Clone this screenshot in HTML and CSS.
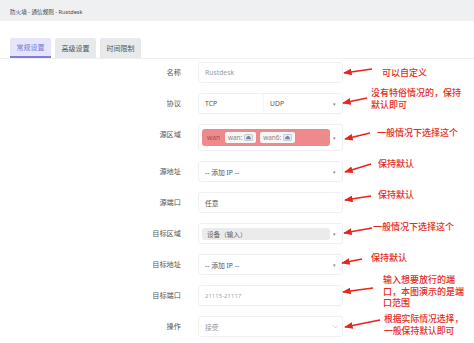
FILE: index.html
```html
<!DOCTYPE html>
<html lang="zh">
<head>
<meta charset="utf-8">
<link rel="stylesheet" href="styles.css">
</head>
<body>
<div class="page">
  <div class="header"><span class="crumb">防火墙 - 通信规则 - Rustdesk</span></div>
  <div class="tabs">
    <div class="tab active">常规设置</div>
    <div class="tab">高级设置</div>
    <div class="tab">时间限制</div>
  </div>
  <div class="form">
    <div class="row"><div class="label">名称</div><div class="field"><span class="ph">Rustdesk</span></div></div>
    <div class="row"><div class="label">协议</div><div class="field proto"><span class="tcp">TCP</span><span class="udp">UDP</span><span class="caret">▾</span></div></div>
    <div class="row"><div class="label">源区域</div>
      <div class="field zone">
        <div class="pill red"><span class="zname">wan</span>
          <span class="chip">wan: <svg class="net" viewBox="0 0 10 8"><rect x="0.5" y="0.5" width="9" height="7" rx="1" fill="#e8eef5" stroke="#9aa7b5" stroke-width="0.6"/><path d="M2 6 L3 3 L5 2 L7 3 L8 6 Z" fill="#6f86a3"/></svg></span>
          <span class="chip">wan6: <svg class="net" viewBox="0 0 10 8"><rect x="0.5" y="0.5" width="9" height="7" rx="1" fill="#e8eef5" stroke="#9aa7b5" stroke-width="0.6"/><path d="M2 6 L3 3 L5 2 L7 3 L8 6 Z" fill="#6f86a3"/></svg></span>
        </div>
        <span class="caret">▾</span>
      </div>
    </div>
    <div class="row"><div class="label">源地址</div><div class="field"><span class="val">-- 添加 IP --</span><span class="caret">▾</span></div></div>
    <div class="row"><div class="label">源端口</div><div class="field"><span class="val">任意</span></div></div>
    <div class="row"><div class="label">目标区域</div><div class="field zone2"><div class="pill gray">设备（输入）</div><span class="caret">▾</span></div></div>
    <div class="row"><div class="label">目标地址</div><div class="field"><span class="val">-- 添加 IP --</span><span class="caret">▾</span></div></div>
    <div class="row"><div class="label">目标端口</div><div class="field"><span class="ph small">21115-21117</span></div></div>
    <div class="row"><div class="label">操作</div><div class="field"><span class="ph">接受</span><svg class="chev" viewBox="0 0 8 5"><path d="M1 1 L4 4 L7 1" fill="none" stroke="#bbb" stroke-width="0.8"/></svg></div></div>
  </div>

  <div class="notes">
    <svg class="arrows" width="474" height="343" viewBox="0 0 474 343">
      <defs>
        <marker id="ah" markerWidth="5" markerHeight="4" refX="4.5" refY="2" orient="auto-start-reverse">
          <path d="M0,0 L5,2 L0,4 Z" fill="#e8241c"/>
        </marker>
      </defs>
      <g stroke="#e8241c" stroke-width="1.7" marker-start="url(#ah)">
        <line x1="344" y1="73" x2="372" y2="69"/>
        <line x1="343" y1="103" x2="367" y2="98"/>
        <line x1="345" y1="139" x2="370" y2="133"/>
        <line x1="345" y1="172" x2="371" y2="164"/>
        <line x1="345" y1="200" x2="371" y2="196"/>
        <line x1="344" y1="233" x2="372" y2="228"/>
        <line x1="342" y1="263" x2="362" y2="259"/>
        <line x1="343" y1="292" x2="373" y2="288"/>
        <line x1="345" y1="327" x2="380" y2="320"/>
      </g>
    </svg>
    <div class="note n1">可以自定义</div>
    <div class="note n2">没有特俗情况的，保持<br>默认即可</div>
    <div class="note n3">一般情况下选择这个</div>
    <div class="note n4">保持默认</div>
    <div class="note n5">保持默认</div>
    <div class="note n6">一般情况下选择这个</div>
    <div class="note n7">保持默认</div>
    <div class="note n8">输入想要放行的端<br>口，本图演示的是端<br>口范围</div>
    <div class="note n9">根据实际情况选择，<br>一般保持默认即可</div>
  </div>
</div>
</body>
</html>
```
FILE: styles.css
```css
html, body {
  margin: 0;
  padding: 0;
  background: #ffffff;
}
body {
  font-family: "Noto Sans", "Noto Sans CJK SC", sans-serif;
  color: #555;
}
.page {
  position: relative;
  width: 474px;
  height: 343px;
  overflow: hidden;
}
.header {
  height: 21px;
  background: #eef0f2;
  display: flex;
  align-items: center;
  padding-left: 10px;
  padding-top: 2px;
  box-sizing: border-box;
}
.crumb {
  font-size: 5.6px;
  color: #444;
}
.tabs {
  margin-top: 17px;
  padding-left: 10px;
  display: flex;
  gap: 4px;
  border-bottom: 1px solid #f0f0f2;
}
.tab {
  width: 41px;
  height: 20px;
  box-sizing: border-box;
  display: flex;
  align-items: center;
  justify-content: center;
  font-size: 7px;
  color: #555;
  background: #e7e9eb;
  border-radius: 2px 2px 0 0;
}
.tab.active {
  background: #e6e5fa;
  color: #7a78d8;
  border-bottom: 2px solid #7f7ddc;
}
.form {
  margin-top: 3px;
  display: flex;
  flex-direction: column;
  gap: 10px;
}
.row {
  display: flex;
  gap: 17px;
  align-items: flex-start;
}
.label {
  width: 181px;
  text-align: right;
  line-height: 21px;
  font-size: 7.2px;
  color: #555;
}
.field {
  width: 145px;
  height: 21px;
  box-sizing: border-box;
  border: 1px solid #f0f0f1;
  border-radius: 3px;
  display: flex;
  align-items: center;
  padding: 0 6px;
  font-size: 6.8px;
  color: #555;
  position: relative;
}
.ph { color: #9a9a9a; }
.ph.small { font-size: 6px; color: #a5a5a5; }
.val { color: #555; }
.caret {
  position: absolute;
  right: 6px;
  font-size: 5px;
  color: #888;
}
.proto .tcp { width: 58px; }
.proto .udp {
  border-left: 1px solid #f5f5f5;
  padding-left: 6px;
  height: 100%;
  display: flex;
  align-items: center;
}
.zone {
  height: 27px;
  padding: 0 3px;
}
.zone2 { padding: 0 2px; }
.pill {
  width: 128px;
  height: 17px;
  box-sizing: border-box;
  border-radius: 3px;
  display: flex;
  align-items: center;
  gap: 4px;
  padding: 0 5px;
}
.pill.red { background: #ef8a8c; }
.zname { color: #a24f52; font-size: 6.6px; margin-right: 1px; }
.chip {
  background: #f6f6f6;
  border-radius: 2px;
  height: 11px;
  padding: 0 3px;
  display: flex;
  align-items: center;
  gap: 2px;
  font-size: 6.4px;
  color: #888;
}
.net { width: 9px; height: 7px; }
.zone2 .pill.gray {
  background: #ebebeb;
  height: 12px;
  font-size: 6.6px;
  color: #666;
  padding: 0 5px;
  margin-left: 1px;
}
.chev {
  position: absolute;
  right: 3px;
  width: 7px;
  height: 5px;
}
.notes {
  position: absolute;
  left: 0;
  top: 0;
  width: 474px;
  height: 343px;
  pointer-events: none;
}
.arrows {
  position: absolute;
  left: 0;
  top: 0;
}
.note {
  position: absolute;
  font-family: "Noto Sans CJK SC", sans-serif;
  font-size: 9px;
  line-height: 12px;
  color: #e52a22;
  font-weight: 500;
  white-space: nowrap;
}
.n1 { left: 382px; top: 67px; }
.n2 { left: 371px; top: 87px; }
.n3 { left: 377px; top: 127px; }
.n4 { left: 378px; top: 158px; }
.n5 { left: 378px; top: 189px; }
.n6 { left: 373px; top: 221px; }
.n7 { left: 371px; top: 252px; }
.n8 { left: 383px; top: 274px; line-height: 11.5px; font-size: 9px; }
.n9 { left: 384px; top: 313px; line-height: 11.5px; font-size: 8.8px; }
```
